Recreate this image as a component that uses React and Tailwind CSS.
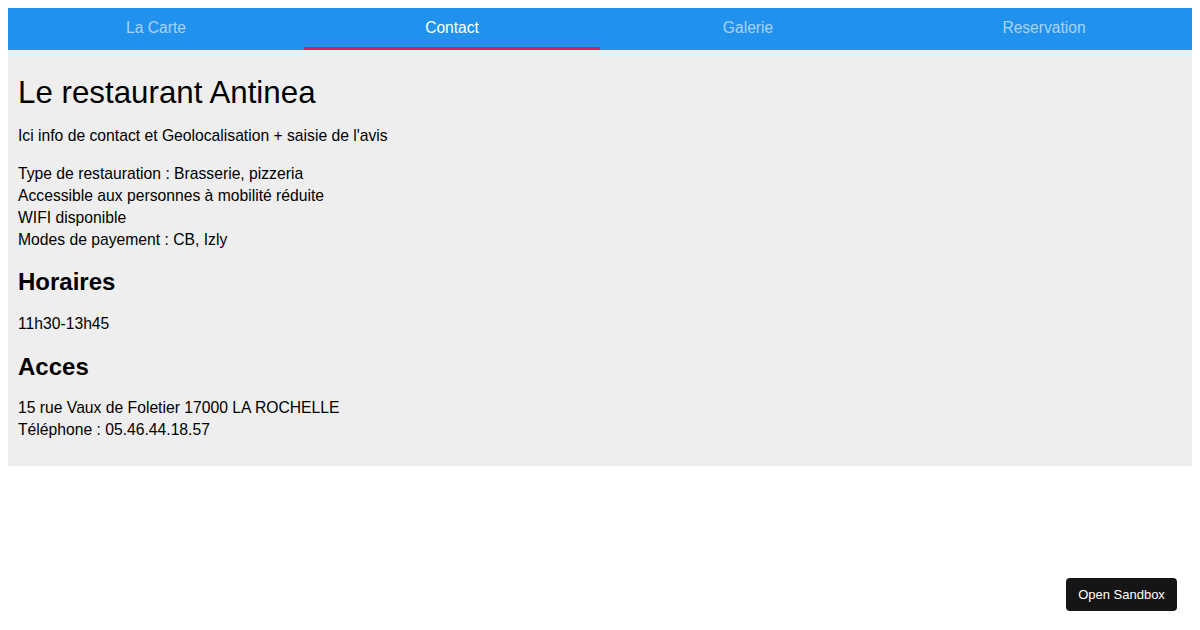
import React, { useState } from 'react';

const tabs = ['La Carte', 'Contact', 'Galerie', 'Reservation'];

const App = () => {
    const [active, setActive] = useState(1);

    return (
        <div className="min-h-[630px] bg-white p-2 font-['Liberation_Sans',Arial,sans-serif] text-black">
            {/* Tabs */}
            <nav className="grid grid-cols-4 h-[42px] bg-[#2092ee]">
                {tabs.map((tab, i) => (
                    <button
                        key={tab}
                        onClick={() => setActive(i)}
                        className={`relative flex items-start justify-center pt-[10px] text-[15.6px] leading-[20px] ${i === active ? 'text-white' : 'text-[#a9d3f8]'}`}
                    >
                        {tab}
                        {i === active && (
                            <span className="absolute left-0 right-0 bottom-0 h-[3px] bg-[#e3165f]"></span>
                        )}
                    </button>
                ))}
            </nav>

            {/* Content */}
            <div className="bg-[#eeeeee] px-[10px] pt-[21px] pb-[25px] text-[15.7px] leading-[22px]">
                <h1 className="text-[31.3px] leading-[44px] mb-[10px]">Le restaurant Antinea</h1>
                <p className="mb-[16px]">Ici info de contact et Geolocalisation + saisie de l'avis</p>
                <p className="mb-[17px]">
                    Type de restauration : Brasserie, pizzeria<br />
                    Accessible aux personnes à mobilité réduite<br />
                    WIFI disponible<br />
                    Modes de payement : CB, Izly
                </p>
                <h2 className="text-[24px] leading-[28px] font-bold mb-[17px]">Horaires</h2>
                <p className="mb-[18px]">11h30-13h45</p>
                <h2 className="text-[24px] leading-[28px] font-bold mb-[16px]">Acces</h2>
                <p>
                    15 rue Vaux de Foletier 17000 LA ROCHELLE<br />
                    Téléphone : 05.46.44.18.57
                </p>
            </div>

            <button className="fixed right-[23px] bottom-[19px] w-[111px] h-[33px] rounded-[4px] bg-[#151515] text-[13px] text-white">
                Open Sandbox
            </button>
        </div>
    );
};

export default App;
